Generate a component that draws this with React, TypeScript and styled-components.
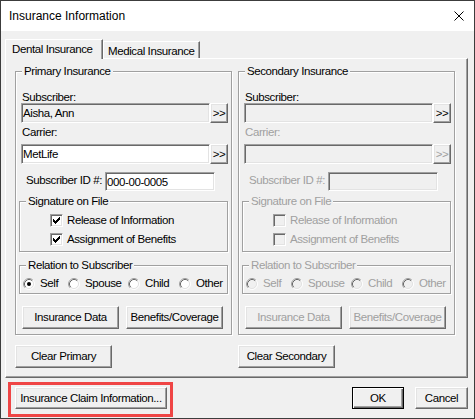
import React from 'react';
import styled, { createGlobalStyle, css } from 'styled-components';

const FONT = `"Liberation Sans", Arial, sans-serif`;
const FACE = '#f0f0f0';
const GRAY = '#a0a0a0';
const DARK = '#696969';
const LIGHT = '#e3e3e3';
const DISABLED = '#a0a0a0';

const GlobalStyle = createGlobalStyle`
  html, body { margin: 0; padding: 0; background: #ffffff; }
  body { font-family: ${FONT}; }
`;

const Window = styled.div`
  box-sizing: border-box;
  width: 475px;
  height: 419px;
  border: 1px solid #3c3c3c;
  background: ${FACE};
  display: flex;
  flex-direction: column;
  font-family: ${FONT};
  font-size: 11.5px;
  letter-spacing: -0.4px;
  line-height: 13px;
  color: #000;
  overflow: hidden;
`;

const TitleBar = styled.div`
  height: 30px;
  flex: none;
  background: #ffffff;
  display: flex;
  align-items: center;
  justify-content: space-between;
  padding: 0 10px 0 8px;
  font-size: 12px;
  letter-spacing: 0;
  line-height: 14px;
`;

const Body = styled.div`
  flex: 1;
  display: flex;
  flex-direction: column;
  padding: 8px 6px 0 4px;
`;

const TabStrip = styled.div`
  display: flex;
  align-items: flex-end;
  height: 19px;
  position: relative;
  z-index: 1;
`;

const Tab = styled.div<{ $active?: boolean }>`
  box-sizing: border-box;
  border-top: 1px solid #ffffff;
  border-left: 1px solid #ffffff;
  border-right: 1px solid ${DARK};
  box-shadow: inset -1px 0 0 ${GRAY};
  padding-top: 3px;
  white-space: nowrap;
  background: ${FACE};
  ${(p) =>
    p.$active
      ? css`
          width: 98px;
          height: 20px;
          margin-bottom: -1px;
          padding-left: 6px;
        `
      : css`
          width: 97px;
          height: 17px;
          padding-left: 4px;
        `}
`;

const Panel = styled.div`
  box-sizing: border-box;
  height: 320px;
  border: 1px solid;
  border-color: #ffffff ${DARK} ${DARK} #ffffff;
  box-shadow: inset -1px -1px 0 ${GRAY};
  padding: 6px 0 0 9px;
  display: flex;
  gap: 6px;
`;

const Column = styled.div`
  width: 217px;
  display: flex;
  flex-direction: column;
  align-items: flex-start;
`;

const Group = styled.fieldset<{ $top?: number; $inset?: number }>`
  box-sizing: border-box;
  margin: ${(p) => p.$top ?? 0}px ${(p) => p.$inset ?? 0}px 0;
  padding: 0;
  min-width: 0;
  align-self: stretch;
  border: 1px solid ${GRAY};
  box-shadow: inset 1px 1px 0 #ffffff, 1px 1px 0 #ffffff;
`;

const Legend = styled.legend<{ $disabled?: boolean }>`
  margin-left: 6px;
  padding: 0 2px;
  line-height: 13px;
  background: ${FACE};
  color: ${(p) => (p.$disabled ? DISABLED : '#000')};
  white-space: nowrap;
`;

const GroupBody = styled.div`
  padding-bottom: 5px;
`;

const FieldLabel = styled.div<{ $top: number; $disabled?: boolean }>`
  margin-top: ${(p) => p.$top}px;
  padding-left: 6px;
  height: 13px;
  color: ${(p) => (p.$disabled ? DISABLED : '#000')};
`;

const FieldRow = styled.div<{ $top: number }>`
  display: flex;
  margin: ${(p) => p.$top}px 0 0 5px;
`;

const Field = styled.input<{ $width: number; $height?: number; $white?: boolean }>`
  box-sizing: border-box;
  width: ${(p) => p.$width}px;
  height: ${(p) => p.$height ?? 20}px;
  margin: 0;
  padding: 0 0 0 1px;
  font: inherit;
  letter-spacing: inherit;
  color: #000;
  background: ${(p) => (p.$white ? '#ffffff' : FACE)};
  border: 1px solid;
  border-color: ${GRAY} #ffffff #ffffff ${GRAY};
  box-shadow: inset 1px 1px 0 ${DARK}, inset -1px -1px 0 ${LIGHT};
  border-radius: 0;
  outline: none;
`;

const Btn = styled.button<{ $w: number; $h?: number; $default?: boolean }>`
  box-sizing: border-box;
  flex: none;
  width: ${(p) => p.$w}px;
  height: ${(p) => p.$h ?? 23}px;
  margin: 0;
  padding: 0;
  font: inherit;
  letter-spacing: inherit;
  line-height: 13px;
  white-space: nowrap;
  color: ${(p) => (p.disabled ? DISABLED : '#000')};
  background: ${FACE};
  border: 1px solid;
  border-color: #ffffff ${DARK} ${DARK} #ffffff;
  box-shadow: inset -1px -1px 0 ${GRAY}, inset 1px 1px 0 ${LIGHT};
  border-radius: 0;
  cursor: default;
  ${(p) =>
    p.$default &&
    css`
      border-color: #000;
      box-shadow: inset 1px 1px 0 #ffffff, inset -1px -1px 0 ${DARK}, inset -2px -2px 0 ${GRAY};
    `}
`;

const IdRow = styled.div`
  display: flex;
  margin-top: 8px;
  padding-left: 10px;
`;

const IdLabel = styled.div<{ $disabled?: boolean }>`
  width: 79px;
  padding-top: 2px;
  white-space: nowrap;
  color: ${(p) => (p.$disabled ? DISABLED : '#000')};
`;

const CheckList = styled.div`
  padding: 6px 0 5px 30px;
  display: flex;
  flex-direction: column;
  gap: 6px;
`;

const CheckRow = styled.div`
  display: flex;
  align-items: center;
  height: 13px;
`;

const Box = styled.span<{ $disabled?: boolean }>`
  box-sizing: border-box;
  width: 13px;
  height: 13px;
  flex: none;
  display: flex;
  align-items: center;
  justify-content: center;
  background: ${(p) => (p.$disabled ? FACE : '#ffffff')};
  border: 1px solid;
  border-color: ${GRAY} #ffffff #ffffff ${GRAY};
  box-shadow: inset 1px 1px 0 ${DARK}, inset -1px -1px 0 ${LIGHT};
`;

const OptionText = styled.span<{ $disabled?: boolean; $gap: number }>`
  margin-left: ${(p) => p.$gap}px;
  white-space: nowrap;
  color: ${(p) => (p.$disabled ? DISABLED : '#000')};
`;

const RadioRow = styled.div`
  display: flex;
  margin-top: 5px;
  padding: 0 0 3px 3px;
  height: 13px;
`;

const RadioItem = styled.label<{ $width?: number }>`
  display: flex;
  align-items: center;
  height: 13px;
  ${(p) => (p.$width ? `width: ${p.$width}px;` : '')}
`;

const ButtonRow = styled.div`
  display: flex;
  gap: 7px;
  margin-top: 12px;
  padding-left: 6px;
`;

const ClearBtn = styled(Btn)`
  margin-top: 10px;
`;

const BottomRow = styled.div`
  display: flex;
  margin-top: 9px;
  padding-left: 10px;
`;

const Highlight = styled.div`
  position: relative;
  &::after {
    content: '';
    position: absolute;
    top: -5px;
    left: -7px;
    right: -6px;
    bottom: -8px;
    border: 3px solid #ef4545;
    pointer-events: none;
  }
`;

const OkBtn = styled(Btn)`
  margin-left: auto;
`;

const CancelBtn = styled(Btn)`
  margin-left: 11px;
`;

const CloseIcon = () => (
  <svg width="10" height="10" viewBox="0 0 10 10" aria-label="Close">
    <path d="M0.5 0.5 L9.5 9.5 M9.5 0.5 L0.5 9.5" stroke="#000" strokeWidth="1" fill="none" />
  </svg>
);

const CHECK_ROWS: [number, number, number][] = [
  [6, 0, 1],
  [5, 1, 2],
  [0, 2, 1],
  [4, 2, 3],
  [0, 3, 2],
  [3, 3, 3],
  [0, 4, 5],
  [1, 5, 3],
  [2, 6, 1],
];

const CheckBox = ({ checked, disabled }: { checked: boolean; disabled?: boolean }) => (
  <Box $disabled={disabled}>
    {checked && (
      <svg width="7" height="7" viewBox="0 0 7 7" shapeRendering="crispEdges">
        {CHECK_ROWS.map(([x, y, w], i) => (
          <rect key={i} x={x} y={y} width={w} height={1} fill={disabled ? DISABLED : '#000'} />
        ))}
      </svg>
    )}
  </Box>
);

const Radio = ({ checked, disabled }: { checked: boolean; disabled?: boolean }) => (
  <svg width="12" height="12" viewBox="0 0 12 12" style={{ flex: 'none' }}>
    <circle cx="6" cy="6" r="4.5" fill={disabled ? FACE : '#ffffff'} />
    <path d="M2.11 9.89 A5.5 5.5 0 0 1 9.89 2.11" stroke={GRAY} fill="none" />
    <path d="M9.89 2.11 A5.5 5.5 0 0 1 2.11 9.89" stroke="#ffffff" fill="none" />
    <path d="M2.82 9.18 A4.5 4.5 0 0 1 9.18 2.82" stroke={DARK} fill="none" />
    <path d="M9.18 2.82 A4.5 4.5 0 0 1 2.82 9.18" stroke={LIGHT} fill="none" />
    {checked && <circle cx="6" cy="6" r="2" fill="#000" />}
  </svg>
);

const RELATIONS: { label: string; width?: number }[] = [
  { label: 'Self', width: 45 },
  { label: 'Spouse', width: 60 },
  { label: 'Child', width: 51 },
  { label: 'Other' },
];

type SideProps = {
  title: string;
  clearLabel: string;
  secondary?: boolean;
};

const InsuranceSide = ({ title, clearLabel, secondary }: SideProps) => {
  const d = !!secondary;
  return (
    <Column>
      <Group>
        <Legend>{title}</Legend>
        <GroupBody>
          <FieldLabel $top={13}>Subscriber:</FieldLabel>
          <FieldRow $top={-1}>
            <Field $width={189} readOnly defaultValue={d ? '' : 'Aisha, Ann'} />
            <Btn $w={18} $h={20}>&gt;&gt;</Btn>
          </FieldRow>
          <FieldLabel $top={3} $disabled={d}>
            Carrier:
          </FieldLabel>
          <FieldRow $top={5}>
            <Field $width={189} $white={!d} readOnly defaultValue={d ? '' : 'MetLife'} />
            <Btn $w={18} $h={20} disabled={d}>
              &gt;&gt;
            </Btn>
          </FieldRow>
          <IdRow>
            <IdLabel $disabled={d}>Subscriber ID #:</IdLabel>
            <Field $width={110} $height={19} $white={!d} readOnly defaultValue={d ? '' : '000-00-0005'} />
          </IdRow>
          <Group $top={4} $inset={3}>
            <Legend $disabled={d}>Signature on File</Legend>
            <CheckList>
              <CheckRow>
                <CheckBox checked={!d} disabled={d} />
                <OptionText $gap={4} $disabled={d}>
                  Release of Information
                </OptionText>
              </CheckRow>
              <CheckRow>
                <CheckBox checked={!d} disabled={d} />
                <OptionText $gap={4} $disabled={d}>
                  Assignment of Benefits
                </OptionText>
              </CheckRow>
            </CheckList>
          </Group>
          <Group $top={7} $inset={3}>
            <Legend $disabled={d}>Relation to Subscriber</Legend>
            <RadioRow>
              {RELATIONS.map((r, i) => (
                <RadioItem key={r.label} $width={r.width}>
                  <Radio checked={!d && i === 0} disabled={d} />
                  <OptionText $gap={5} $disabled={d}>
                    {r.label}
                  </OptionText>
                </RadioItem>
              ))}
            </RadioRow>
          </Group>
          <ButtonRow>
            <Btn $w={97} disabled={d}>
              Insurance Data
            </Btn>
            <Btn $w={97} disabled={d}>
              Benefits/Coverage
            </Btn>
          </ButtonRow>
        </GroupBody>
      </Group>
      <ClearBtn $w={97}>{clearLabel}</ClearBtn>
    </Column>
  );
};

export default function App() {
  return (
    <>
      <GlobalStyle />
      <Window>
        <TitleBar>
          <span>Insurance Information</span>
          <CloseIcon />
        </TitleBar>
        <Body>
          <TabStrip>
            <Tab $active>Dental Insurance</Tab>
            <Tab>Medical Insurance</Tab>
          </TabStrip>
          <Panel>
            <InsuranceSide title="Primary Insurance" clearLabel="Clear Primary" />
            <InsuranceSide title="Secondary Insurance" clearLabel="Clear Secondary" secondary />
          </Panel>
          <BottomRow>
            <Highlight>
              <Btn $w={152} $h={22}>
                Insurance Claim Information...
              </Btn>
            </Highlight>
            <OkBtn $w={52} $h={22} $default>
              OK
            </OkBtn>
            <CancelBtn $w={53} $h={22}>
              Cancel
            </CancelBtn>
          </BottomRow>
        </Body>
      </Window>
    </>
  );
}
